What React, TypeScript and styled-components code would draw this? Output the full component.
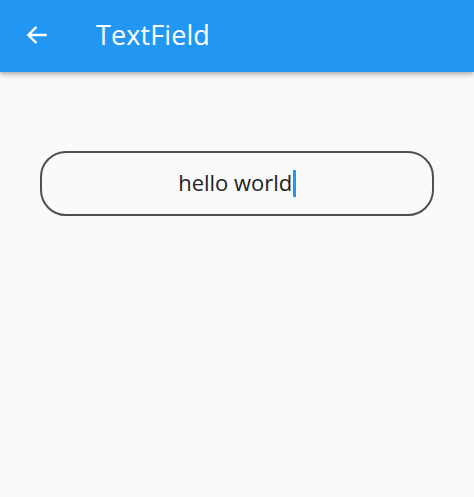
import React, { useState } from 'react';
import styled, { createGlobalStyle } from 'styled-components';

const GlobalStyle = createGlobalStyle`
  html, body {
    margin: 0;
    padding: 0;
    background: #fafafa;
    font-family: 'Open Sans', 'Noto Sans', sans-serif;
  }
`;

const Page = styled.div`
  width: 474px;
  height: 497px;
  background: #fafafa;
  display: flex;
  flex-direction: column;
`;

const AppBar = styled.header`
  height: 72px;
  box-sizing: border-box;
  padding: 0 0 3px 24px;
  background: #2196f3;
  display: flex;
  align-items: center;
  box-shadow: 0 2px 4px rgba(0, 0, 0, 0.25), 0 4px 8px rgba(0, 0, 0, 0.08);
  z-index: 1;
`;

const BackButton = styled.button`
  width: 26px;
  height: 26px;
  padding: 0;
  border: 0;
  background: none;
  display: flex;
  align-items: center;
  justify-content: center;
  cursor: pointer;
`;

const Title = styled.h1`
  margin: 0 0 0 46px;
  color: #fff;
  font-size: 27px;
  font-weight: 500;
  letter-spacing: 0.1px;
`;

const Body = styled.main`
  flex: 1;
  padding: 79px 40px 0 40px;
`;

const Field = styled.div`
  height: 65px;
  box-sizing: border-box;
  border: 2px solid #505050;
  border-radius: 26px;
  display: flex;
  align-items: center;
  justify-content: center;
`;

const Value = styled.span`
  font-size: 22px;
  color: #222;
  display: flex;
  align-items: center;
  margin-top: -3px;
`;

const Caret = styled.span`
  display: inline-block;
  width: 2.5px;
  height: 27px;
  margin-left: 1px;
  margin-top: 3px;
  background: #2196f3;
`;

const App: React.FC = () => {
  const [value] = useState('hello world');

  return (
    <Page>
      <GlobalStyle />
      <AppBar>
        <BackButton aria-label="Back">
          <svg width="26" height="26" viewBox="0 0 24 24" fill="none">
            <path
              d="M21 12H4M11.5 4.5L4 12l7.5 7.5"
              stroke="#fff"
              strokeWidth="2.2"
            />
          </svg>
        </BackButton>
        <Title>TextField</Title>
      </AppBar>
      <Body>
        <Field>
          <Value>
            {value}
            <Caret />
          </Value>
        </Field>
      </Body>
    </Page>
  );
};

export default App;
